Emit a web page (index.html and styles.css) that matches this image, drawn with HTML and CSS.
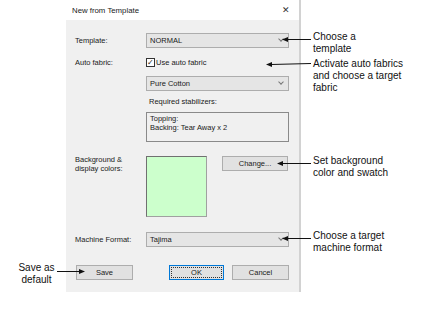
FILE: index.html
```html
<!DOCTYPE html>
<html lang="en">
<head>
    <meta charset="UTF-8">
    <title>New from Template</title>
    <link rel="stylesheet" href="styles.css">
</head>
<body>
    <div class="dialog">
        <div class="titlebar">
            <span>New from Template</span>
            <span class="close">&#x2715;</span>
        </div>
        <div class="dialog-body">
            <div class="row row-template">
                <label>Template:</label>
                <div class="combo">NORMAL<span class="chev"></span></div>
            </div>
            <div class="row row-auto">
                <label>Auto fabric:</label>
                <div class="check"><span class="box">&#x2713;</span>Use auto fabric</div>
            </div>
            <div class="row row-fabric">
                <label></label>
                <div class="combo">Pure Cotton<span class="chev"></span></div>
            </div>
            <div class="row row-req">
                <label></label>
                <div class="req">Required stabilizers:</div>
            </div>
            <div class="row row-stab">
                <label></label>
                <div class="stab">Topping:<br>Backing: Tear Away x 2</div>
            </div>
            <div class="row row-bg">
                <label>Background &amp;<br>display colors:</label>
                <div class="bg-ctrl">
                    <div class="swatch"></div>
                    <button class="btn btn-change">Change...</button>
                </div>
            </div>
            <div class="row row-machine">
                <label>Machine Format:</label>
                <div class="combo">Tajima<span class="chev"></span></div>
            </div>
            <div class="buttons">
                <button class="btn btn-save">Save</button>
                <div class="right-btns">
                    <button class="btn btn-ok">OK</button>
                    <button class="btn btn-cancel">Cancel</button>
                </div>
            </div>
        </div>
    </div>

    <!-- callouts -->
    <div class="note note-template">Choose a<br>template</div>
    <div class="note note-fabric">Activate auto fabrics<br>and choose a target<br>fabric</div>
    <div class="note note-bg">Set background<br>color and swatch</div>
    <div class="note note-machine">Choose a target<br>machine format</div>
    <div class="note note-save">Save as<br>default</div>

    <svg class="arrows" width="423" height="310" viewBox="0 0 423 310">
        <g stroke="#111" stroke-width="1" fill="#111">
            <line x1="311" y1="39.5" x2="287" y2="39.5"/>
            <polygon points="282,39.5 288,37 288,42" stroke="none"/>
            <line x1="311" y1="63.5" x2="271" y2="64.5"/>
            <polygon points="266,64.5 272,62 272,67" stroke="none"/>
            <line x1="311" y1="163.5" x2="282" y2="163.5"/>
            <polygon points="277,163.5 283,161 283,166" stroke="none"/>
            <line x1="311" y1="238.5" x2="287" y2="238.5"/>
            <polygon points="282,238.5 288,236 288,241" stroke="none"/>
            <line x1="57" y1="271.5" x2="80" y2="271.5"/>
            <polygon points="85,271.5 79,269 79,274" stroke="none"/>
        </g>
    </svg>
</body>
</html>
```

FILE: styles.css
```css
* {
    margin: 0;
    padding: 0;
    box-sizing: border-box;
}

body {
    background: #fff;
    font-family: 'Liberation Sans', Arial, sans-serif;
    font-size: 7.5px;
    color: #1a1a1a;
    position: relative;
    width: 423px;
    height: 310px;
    overflow: hidden;
}

.dialog {
    margin-left: 66px;
    width: 235px;
    border-right: 2px solid #d2d2d2;
}

.titlebar {
    height: 20px;
    background: #fff;
    display: flex;
    align-items: center;
    justify-content: space-between;
    padding: 0 9px 0 6px;
    font-size: 7.8px;
}

.close {
    font-size: 9px;
    color: #333;
}

.dialog-body {
    background: #f0f0f0;
    height: 272px;
    padding: 13px 10px 0 9px;
}

.row {
    display: flex;
    align-items: center;
}

.row label {
    width: 71px;
    flex-shrink: 0;
    line-height: 9px;
}

.row-template { height: 15px; }
.row-auto { height: 12px; margin-top: 8px; }
.row-fabric { height: 15px; margin-top: 8px; }
.row-req { height: 12px; margin-top: 4px; }
.row-stab { height: 30px; margin-top: 5px; }
.row-bg { height: 61px; margin-top: 14px; align-items: flex-start; }
.row-machine { height: 15px; margin-top: 15px; }

.combo {
    flex: 1;
    height: 100%;
    background: #e5e5e5;
    border: 1px solid #adadad;
    display: flex;
    align-items: center;
    justify-content: space-between;
    padding: 0 5px 0 3px;
}

.chev {
    width: 4px;
    height: 4px;
    border-right: 1px solid #777;
    border-bottom: 1px solid #777;
    transform: rotate(45deg);
    margin-top: -3px;
}

.check {
    display: flex;
    align-items: center;
}

.check .box {
    width: 9px;
    height: 9px;
    border: 1px solid #333;
    background: #fff;
    font-size: 8px;
    line-height: 7px;
    text-align: center;
    margin-right: 1px;
}

.req {
    padding-left: 3px;
}

.stab {
    flex: 1;
    height: 100%;
    border: 1px solid #8a8a8a;
    padding: 1px 3px;
    line-height: 9px;
}

.row-bg label {
    margin-top: -1px;
}

.bg-ctrl {
    flex: 1;
    display: flex;
    gap: 15px;
}

.swatch {
    width: 61px;
    height: 61px;
    background: #ccffcc;
    border: 1px solid #a0a0a0;
    border-top-color: #707070;
    border-left-color: #707070;
}

.btn {
    font-family: inherit;
    font-size: 7.5px;
    height: 15px;
    background: #e1e1e1;
    border: 1px solid #adadad;
    color: #1a1a1a;
}

.btn-change {
    width: 66px;
}

.buttons {
    margin-top: 18px;
    display: flex;
    justify-content: space-between;
    padding-left: 1px;
}

.btn-save {
    width: 57px;
}

.right-btns {
    display: flex;
    gap: 8px;
}

.btn-ok {
    width: 55px;
    border: 1px solid #0078d7;
    outline: 1px dotted #333;
    outline-offset: -3px;
}

.btn-cancel {
    width: 57px;
}

.note {
    position: absolute;
    font-family: 'Liberation Sans', Arial, sans-serif;
    font-size: 10px;
    line-height: 12px;
    color: #111;
}

.note-template { left: 313px; top: 31px; }
.note-fabric { left: 313px; top: 58px; }
.note-bg { left: 313px; top: 155px; }
.note-machine { left: 313px; top: 230px; }
.note-save { left: 14px; top: 262px; text-align: center; width: 45px; }

.arrows {
    position: absolute;
    left: 0;
    top: 0;
    pointer-events: none;
}
```
